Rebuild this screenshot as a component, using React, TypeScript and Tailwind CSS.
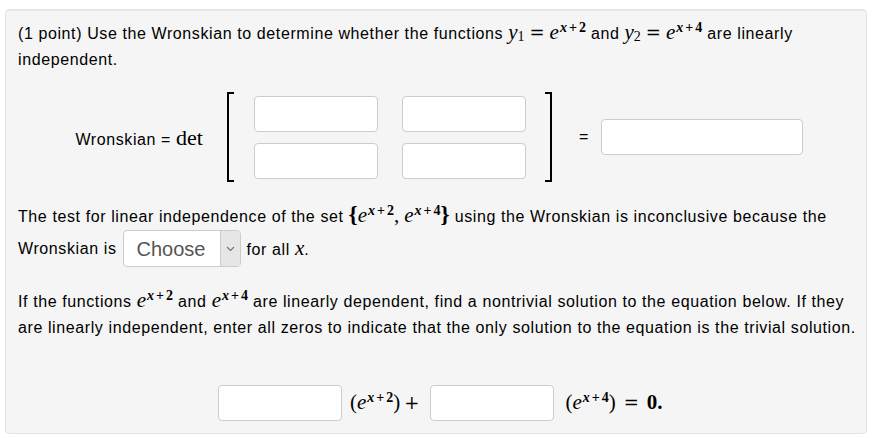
import React from 'react';

const M = 'font-["Liberation_Serif",serif] tracking-normal';
const OP = 'font-["DejaVu_Serif",serif]';

function Ex({ p }: { p: string }) {
  return (
    <span className={`${M} text-[21px] whitespace-nowrap`}>
      <i>e</i>
      <sup className="text-[14px] font-bold -top-[7px] ml-[1px]">
        <i>x</i>
        <span className="mx-[2px]">+</span>
        {p}
      </sup>
    </span>
  );
}

function Yk({ k }: { k: string }) {
  return (
    <span className={`${M} text-[21px] whitespace-nowrap`}>
      <i>y</i>
      <sub className="text-[14px] top-[2px]">{k}</sub>
      <span className={`${OP} text-[18px] mx-[5px]`}>=</span>
    </span>
  );
}

function Box({ w = 'w-[124px]' }: { w?: string }) {
  return <input type="text" className={`${w} h-[36px] bg-white border border-[#cccccc] rounded-[4px] outline-none`} />;
}

export default function App() {
  return (
    <div className="bg-white w-[882px] h-[438px] pt-[9px] pl-[5px] font-['Liberation_Sans',Arial,sans-serif] text-[16px] tracking-[0.6px] text-black">
      <div className="w-[862px] h-[425px] bg-[#f5f5f5] border border-[#e3e3e3] rounded-[4px] shadow-[inset_0_1px_1px_rgba(0,0,0,0.05)] pl-[12px] pr-[8px] pt-[9px]">
        <p className="leading-[26px]">
          (1 point) Use the Wronskian to determine whether the functions <Yk k="1" />
          <Ex p="2" /> and <Yk k="2" />
          <Ex p="4" /> are linearly independent.
        </p>

        {/* Wronskian matrix */}
        <div className="flex items-center mt-[19px] h-[90px]">
          <div className="w-[185px] text-right whitespace-nowrap">
            Wronskian = <span className={`${M} text-[22px] tracking-[0.8px]`}>det</span>
          </div>
          <div className="ml-[24px] w-[7px] h-[90px] border-l-[2px] border-t-[2px] border-b-[2px] border-black" />
          <div className="grid grid-cols-[124px_124px] gap-x-[24px] gap-y-[11px] ml-[20px]">
            <Box />
            <Box />
            <Box />
            <Box />
          </div>
          <div className="ml-[19px] w-[7px] h-[90px] border-r-[2px] border-t-[2px] border-b-[2px] border-black" />
          <span className="ml-[27px]">=</span>
          <div className="ml-[12px]">
            <Box w="w-[202px]" />
          </div>
        </div>

        <div className="mt-[20px]">
          <p className="leading-[26px]">
            The test for linear independence of the set{' '}
            <span className={`${M} text-[21px] whitespace-nowrap`}>
              <span className="text-[23px] font-bold">{'{'}</span>
              <Ex p="2" />
              <span className="mr-[5px]">,</span>
              <Ex p="4" />
              <span className="text-[23px] font-bold">{'}'}</span>
            </span>{' '}
            using the Wronskian is inconclusive because the
          </p>
          <div className="flex items-center h-[37px]">
            <span>Wronskian is</span>
            <div className="ml-[6px] flex w-[118px] h-[37px] bg-white border border-[#cccccc] rounded-[4px] overflow-hidden tracking-normal">
              <span className="flex-1 flex items-center pl-[13px] text-[20px] text-[#555555]">Choose</span>
              <span className="w-[20px] bg-[#e6e6e6] border-l border-[#cccccc] flex items-center justify-center">
                <svg width="9" height="6" viewBox="0 0 9 6">
                  <path d="M1 1l3.5 3.5L8 1" fill="none" stroke="#777" strokeWidth="1.2" />
                </svg>
              </span>
            </div>
            <span className="ml-[6px]">
              for all <i className={`${M} text-[21px]`}>x</i>.
            </span>
          </div>
        </div>

        <p className="leading-[26px] mt-[20px]">
          If the functions <Ex p="2" /> and <Ex p="4" /> are linearly dependent, find a nontrivial solution to the
          equation below. If they are linearly independent, enter all zeros to indicate that the only solution to the
          equation is the trivial solution.
        </p>

        {/* equation row */}
        <div className="flex items-center mt-[44px] ml-[200px]">
          <Box />
          <span className={`${M} text-[21px] ml-[8px] whitespace-nowrap`}>
            (<Ex p="2" />)<span className={`${OP} text-[18px] ml-[4px]`}>+</span>
          </span>
          <div className="ml-[11px]">
            <Box />
          </div>
          <span className={`${M} text-[21px] ml-[11px] whitespace-nowrap`}>
            (<Ex p="4" />)<span className={`${OP} text-[18px] mx-[8px]`}>=</span>
            <b>0.</b>
          </span>
        </div>
      </div>
    </div>
  );
}
